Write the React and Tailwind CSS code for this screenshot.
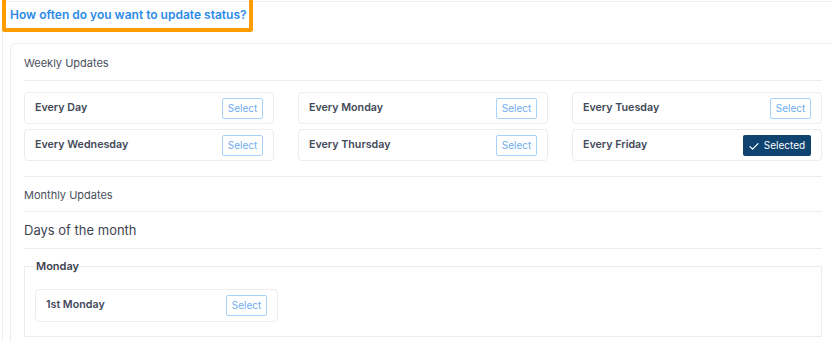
import { useState } from "react";

const weekly = [
  "Every Day",
  "Every Monday",
  "Every Tuesday",
  "Every Wednesday",
  "Every Thursday",
  "Every Friday",
];

const CheckIcon = () => (
  <svg width="10" height="10" viewBox="0 0 10 10" fill="none" className="mr-[5px] mt-[2px]">
    <path d="M1 5.6 L3.6 8.2 L9 2.6" stroke="white" strokeWidth="1.2" strokeLinecap="round" strokeLinejoin="round" />
  </svg>
);

const OptionRow = ({ label, selected, onSelect, className = "" }) => (
  <div
    className={`h-[32px] flex items-center justify-between pl-[10px] pr-[10px] bg-white border border-[#ececec] rounded-[4px] ${className}`}
  >
    <span className="text-[10.7px] font-semibold text-[#434959]">{label}</span>
    {selected ? (
      <button className="h-[21px] w-[68px] flex items-center justify-center bg-[#0f4471] text-white text-[10px] rounded-[2px]">
        <CheckIcon />
        Selected
      </button>
    ) : (
      <button
        onClick={onSelect}
        className="h-[21px] w-[41px] flex items-center justify-center border border-[#a9d2fa] text-[#6fadf0] text-[10px] rounded-[2px] bg-white"
      >
        Select
      </button>
    )}
  </div>
);

export default function App() {
  const [picked, setPicked] = useState("Every Friday");

  return (
    <div className="relative w-[832px] h-[342px] overflow-hidden bg-white pt-[1px] pl-[2px]" style={{ fontFamily: "Inter, 'Noto Sans', sans-serif" }}>
      <div className="border-l border-t border-[#efefef] rounded-tl-[3px] h-[400px] w-[900px]">
        {/* header */}
        <div className="h-[41px] pl-[7px] pt-[5px]">
          <h2 className="text-[12px] leading-[15px] font-semibold text-[#2b8be6]">
            How often do you want to update status?
          </h2>
        </div>

        {/* card */}
        <div className="ml-[7px] w-[860px] border border-[#ececec] rounded-tl-[6px] pl-[13px] h-[320px]">
          <div className="w-[798px]">
            <div className="pt-[12px] pb-[10px] border-b border-[#ececec]">
              <p className="text-[11px] leading-[14px] text-[#4a4f5c]">Weekly Updates</p>
            </div>

            <div className="grid grid-cols-3 gap-x-[24px] gap-y-[5px] pt-[11px] pb-[15px] border-b border-[#ececec]">
              {weekly.map((w) => (
                <OptionRow key={w} label={w} selected={picked === w} onSelect={() => setPicked(w)} />
              ))}
            </div>

            <div className="pt-[11px] pb-[9px] border-b border-[#ececec]">
              <p className="text-[11px] leading-[14px] text-[#4a4f5c]">Monthly Updates</p>
            </div>

            <div className="pt-[10px] pb-[10px] border-b border-[#ececec]">
              <p className="text-[13px] leading-[16px] text-[#3f4452]">Days of the month</p>
            </div>

            <fieldset className="mt-[9px] border border-[#ececec] px-[10px] pt-[14px] pb-[14px]">
              <legend className="text-[11px] font-semibold text-[#3d4252] px-[1px]">Monday</legend>
              <OptionRow
                label="1st Monday"
                selected={picked === "1st Monday"}
                onSelect={() => setPicked("1st Monday")}
                className="w-[243px] h-[33px]"
              />
            </fieldset>
          </div>
        </div>
      </div>

      {/* highlight annotation */}
      <div className="absolute left-[2px] top-0 w-[251px] h-[32px] border-[4px] border-t-0 border-[#ff9c00] rounded-b-[3px] pointer-events-none" />
    </div>
  );
}
